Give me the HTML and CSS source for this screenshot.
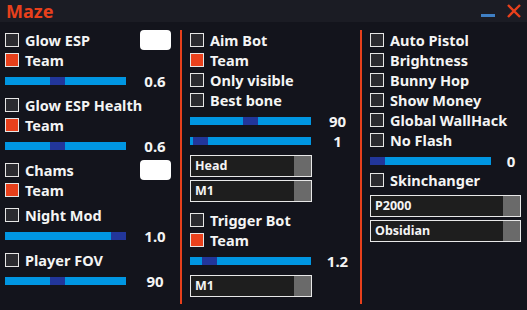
FILE: index.html
```html
<!DOCTYPE html>
<html lang="en">
<head>
  <meta charset="UTF-8" />
  <title>Maze</title>
  <link rel="stylesheet" href="styles.css">
</head>
<body>
  <div class="window">
    <div class="titlebar">
      <span class="title">Maze</span>
      <span class="minimize"></span>
      <svg class="close" width="16" height="16" viewBox="0 0 16 16">
        <path d="M2 2 L14 14 M14 2 L2 14" stroke="#e8401c" stroke-width="2.4" />
      </svg>
    </div>

    <div class="panes">
      <div class="pane first">
        <div class="group">
          <div class="row"><span class="check"></span>Glow ESP<span class="swatch"></span></div>
          <div class="row"><span class="check on"></span>Team</div>
          <div class="slider"><div class="bar"><span class="thumb" style="left: 45px"></span></div><span class="value">0.6</span></div>
        </div>
        <div class="group">
          <div class="row"><span class="check"></span>Glow ESP Health</div>
          <div class="row"><span class="check on"></span>Team</div>
          <div class="slider"><div class="bar"><span class="thumb" style="left: 45px"></span></div><span class="value">0.6</span></div>
        </div>
        <div class="group">
          <div class="row"><span class="check"></span>Chams<span class="swatch"></span></div>
          <div class="row"><span class="check on"></span>Team</div>
        </div>
        <div class="group">
          <div class="row"><span class="check"></span>Night Mod</div>
          <div class="slider"><div class="bar"><span class="thumb" style="left: 106px"></span></div><span class="value">1.0</span></div>
        </div>
        <div class="group">
          <div class="row"><span class="check"></span>Player FOV</div>
          <div class="slider"><div class="bar"><span class="thumb" style="left: 45px"></span></div><span class="value">90</span></div>
        </div>
      </div>

      <div class="pane second">
        <div class="group">
          <div class="row"><span class="check"></span>Aim Bot</div>
          <div class="row"><span class="check on"></span>Team</div>
          <div class="row"><span class="check"></span>Only visible</div>
          <div class="row"><span class="check"></span>Best bone</div>
          <div class="slider"><div class="bar"><span class="thumb" style="left: 53px"></span></div><span class="value">90</span></div>
          <div class="slider"><div class="bar"><span class="thumb" style="left: 3px"></span></div><span class="value">1</span></div>
        </div>
        <div class="group">
          <div class="combo"><span class="text">Head</span><span class="arrow"></span></div>
          <div class="combo"><span class="text">M1</span><span class="arrow"></span></div>
        </div>
        <div class="group">
          <div class="row"><span class="check"></span>Trigger Bot</div>
          <div class="row"><span class="check on"></span>Team</div>
          <div class="slider"><div class="bar"><span class="thumb" style="left: 12px"></span></div><span class="value">1.2</span></div>
        </div>
        <div class="group">
          <div class="combo"><span class="text">M1</span><span class="arrow"></span></div>
        </div>
      </div>

      <div class="pane third">
        <div class="group">
          <div class="row"><span class="check"></span>Auto Pistol</div>
          <div class="row"><span class="check"></span>Brightness</div>
          <div class="row"><span class="check"></span>Bunny Hop</div>
          <div class="row"><span class="check"></span>Show Money</div>
          <div class="row"><span class="check"></span>Global WallHack</div>
          <div class="row"><span class="check"></span>No Flash</div>
          <div class="slider"><div class="bar"><span class="thumb" style="left: 0px"></span></div><span class="value">0</span></div>
          <div class="row"><span class="check"></span>Skinchanger</div>
        </div>
        <div class="group">
          <div class="combo wide"><span class="text">P2000</span><span class="arrow"></span></div>
          <div class="combo wide"><span class="text">Obsidian</span><span class="arrow"></span></div>
        </div>
      </div>
    </div>
  </div>
</body>
</html>
```

FILE: styles.css
```css
body {
  margin: 0;
  background: #13141c;
  font-family: 'Noto Sans', sans-serif;
  font-weight: bold;
  color: #f4f4f4;
}
.window {
  width: 527px;
  height: 310px;
  overflow: hidden;
}
.titlebar {
  height: 22px;
  background: #1b1c24;
  display: flex;
  align-items: center;
  padding: 0 5px 0 6px;
}
.title {
  color: #e8401c;
  font-size: 18px;
  line-height: 22px;
  flex: 1;
}
.minimize {
  width: 14px;
  height: 3px;
  background: #3f7fc4;
  margin: 9px 11px 0 0;
}
.close {
  display: block;
}
.panes {
  display: flex;
  padding: 8px 0 6px;
  height: 274px;
}
.pane {
  display: flex;
  flex-direction: column;
  gap: 5px;
}
.first {
  width: 175px;
  padding-left: 5px;
}
.second {
  width: 170px;
  padding-left: 8px;
  border-left: 2px solid #e8401c;
}
.third {
  flex: 1;
  padding-left: 8px;
  border-left: 2px solid #e8401c;
}
.row {
  height: 20px;
  display: flex;
  align-items: center;
  font-size: 14.5px;
  white-space: nowrap;
}
.check {
  width: 12px;
  height: 12px;
  border: 1px solid #e6e6e6;
  background: #2b2b30;
  margin-right: 6px;
  flex: none;
}
.check.on {
  background: #e8401c;
}
.swatch {
  width: 31px;
  height: 20px;
  background: #fff;
  border-radius: 4px;
  margin: 0 9px 0 auto;
}
.slider {
  height: 20px;
  display: flex;
  align-items: flex-start;
}
.bar {
  position: relative;
  width: 121px;
  height: 8px;
  margin-top: 7px;
  background: #0096e2;
  flex: none;
}
.thumb {
  position: absolute;
  top: 0;
  width: 15px;
  height: 8px;
  background: #22369a;
}
.value {
  flex: 1;
  text-align: center;
  padding-left: 4px;
  font-size: 15px;
  line-height: 22px;
}
.combo {
  width: 120px;
  height: 20px;
  border: 1px solid #e8e8e8;
  background: #1e1e1e;
  display: flex;
  margin-bottom: 3px;
}
.combo.wide {
  width: 149px;
}
.combo .text {
  flex: 1;
  padding-left: 4px;
  font-size: 12.5px;
  line-height: 20px;
}
.combo .arrow {
  width: 17px;
  background: #6a6a6a;
}
```
